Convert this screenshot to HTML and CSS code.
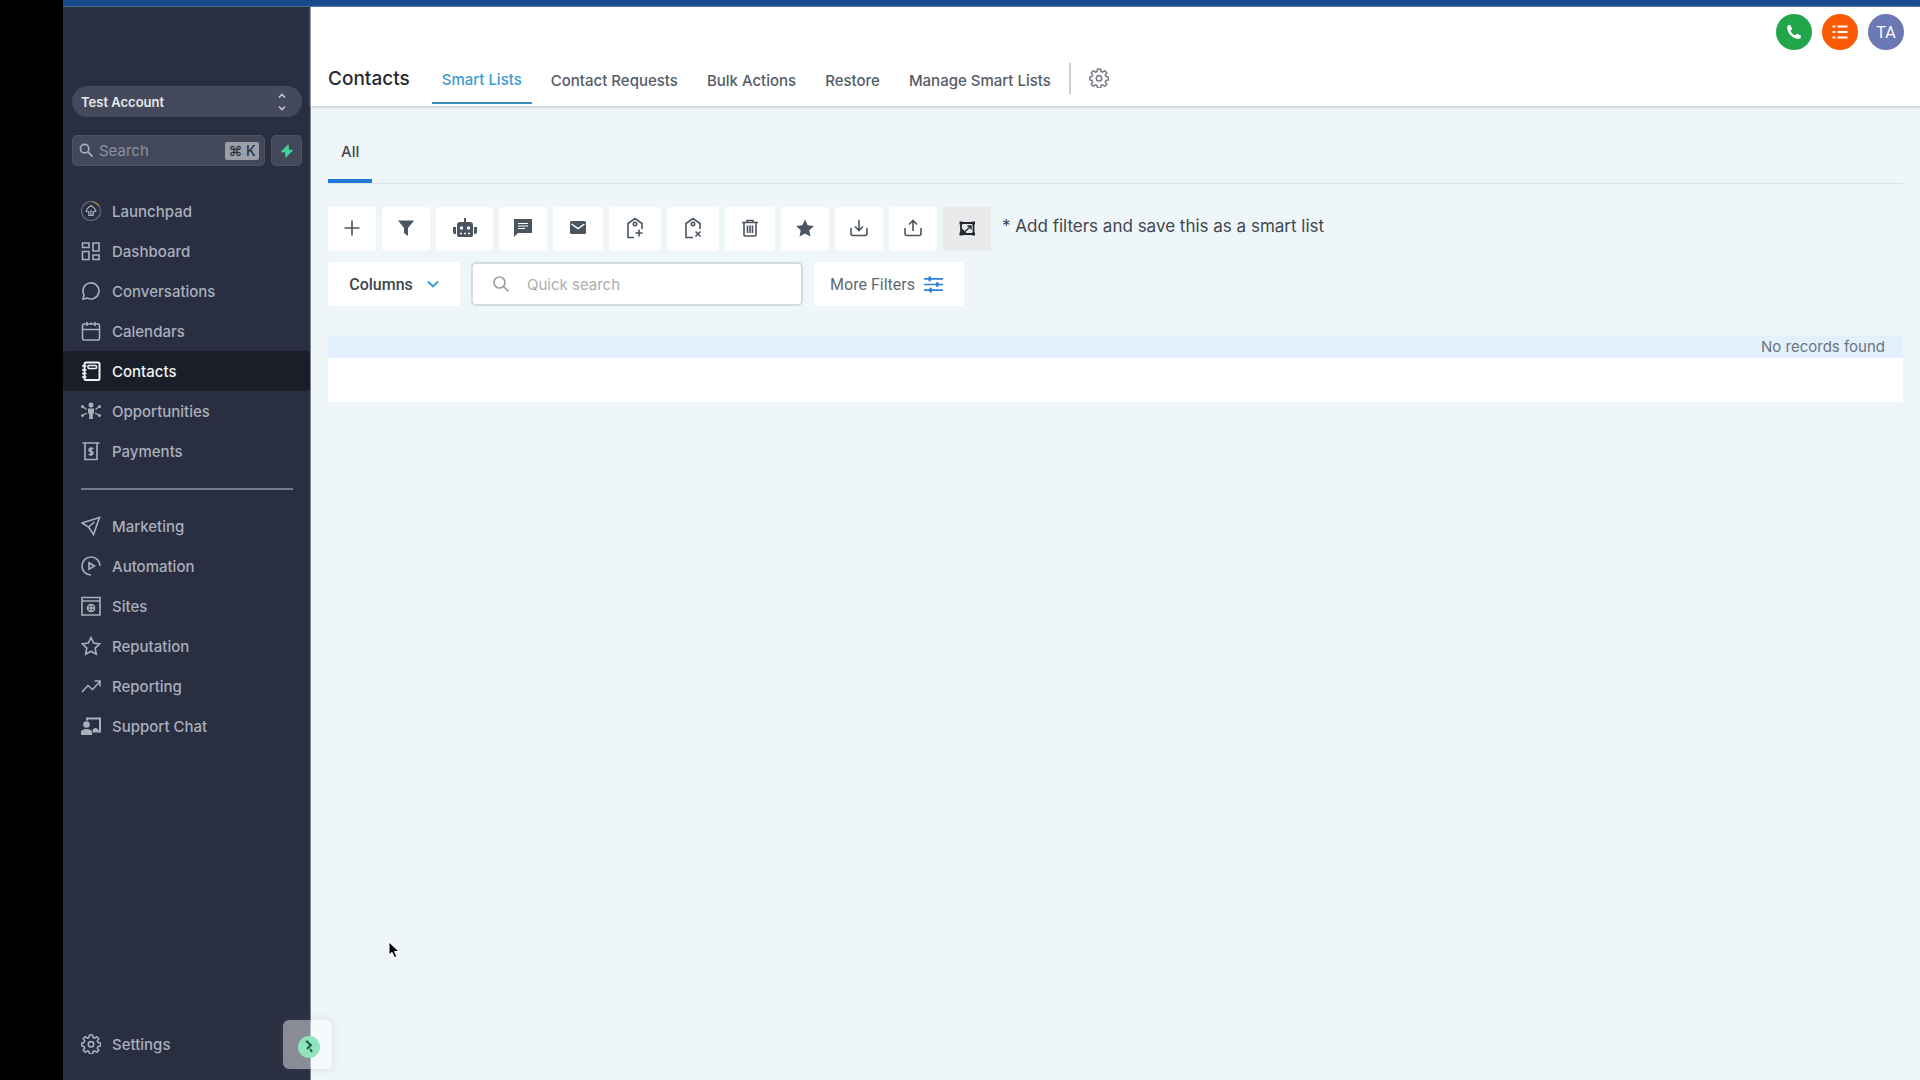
FILE: index.html
```html
<!DOCTYPE html>
<html lang="en">
<head>
<meta charset="utf-8">
<meta name="viewport" content="width=device-width, initial-scale=1">
<title>Contacts</title>
<link rel="stylesheet" href="styles.css">
</head>
<body>
<div class="topbar"></div>
<div class="app">
  <aside class="sidebar">
    <button class="account" type="button">
      <span>Test Account</span>
      <svg class="account-icon" viewBox="0 0 10 18"><path d="M2 4.500l3-3 3 3M2 13.500l3 3 3-3"/></svg>
    </button>
    <div class="search-row">
      <label class="search">
        <svg class="search-icon" viewBox="0 0 16 16"><circle cx="6" cy="6" r="4.500"/><path d="M9.500 9.500l5 5"/></svg>
        <input class="search-input" type="text" placeholder="Search" aria-label="Search">
        <kbd class="shortcut">⌘ K</kbd>
      </label>
      <button class="bolt" type="button" aria-label="Quick actions">
        <svg class="bolt-icon" viewBox="0 0 14 14"><path d="M8.500 0L.500 8.200h4.500L5.500 14 13.500 5.800H9z"/></svg>
      </button>
    </div>
    <nav class="nav">
      <a class="nav-link" href="#"><svg class="icon" viewBox="0 0 20 20"><circle cx="10" cy="10" r="9.500" stroke-width="1.200" opacity=".45"/><path d="M12 .800a9.500 9.500 0 0 1 6 4.500" stroke="#a5814c" stroke-width="1.200"/><path d="M10 4.500c3 2.200 4.800 4 4.800 6h-2.600v4H7.800v-4H5.200c0-2 1.800-3.800 4.800-6zM10 9v5.500" stroke-width="1.200"/></svg>Launchpad</a>
      <a class="nav-link" href="#"><svg class="icon" viewBox="0 0 20 20"><path d="M1.500 2h6.500v4.500H1.500zM12 2h6v8h-6zM1.500 10.500h6.500v8H1.500zM12 14h6v4.500h-6z"/></svg>Dashboard</a>
      <a class="nav-link" href="#"><svg class="icon" viewBox="0 0 20 20"><path d="M2 18l1-4.200a8 8 0 1 1 3.500 3.300z"/></svg>Conversations</a>
      <a class="nav-link" href="#"><svg class="icon" viewBox="0 0 20 20"><rect x="1.500" y="3" width="17" height="16" rx="1.500"/><path d="M1.500 8.500h17M6 1v4M14 1v4M10 1.500v2"/></svg>Calendars</a>
      <a class="nav-link nav-link--active" href="#" aria-current="page"><svg class="icon" viewBox="0 0 20 20"><rect x="3.500" y="1.500" width="15" height="17.500" rx="1.500" stroke-width="2"/><rect x="7" y="4.500" width="8.500" height="3" rx="1"/><path d="M1 5h4.500M1 9h4.500M1 12.500h4.500M1 16h4.500"/></svg>Contacts</a>
      <a class="nav-link" href="#"><svg class="icon" viewBox="0 0 20 20"><g fill="currentColor" stroke="none"><circle cx="10" cy="4" r="2.500"/><path d="M7 7.500h6v5h-1.200V18H8.200v-5.500H7z"/><circle cx="1.500" cy="5.500" r="1.500"/><circle cx="1.500" cy="14.500" r="1.500"/><circle cx="18.500" cy="5.500" r="1.500"/><circle cx="18.500" cy="14.500" r="1.500"/></g><path d="M1.500 5.500L5.500 8.500M1.500 14.500L6 12M18.500 5.500L14.500 8.500M18.500 14.500L14 12" stroke-width="1.400"/></svg>Opportunities</a>
      <a class="nav-link" href="#"><svg class="icon" viewBox="0 0 20 20"><path d="M1.500 2h17M4 2v16.500h12V2M12.500 7.500h-3a1.500 1.500 0 0 0 0 3h1a1.500 1.500 0 0 1 0 3h-3M10 6v9"/></svg>Payments</a>
      <hr class="nav-divider">
      <a class="nav-link" href="#"><svg class="icon" viewBox="0 0 20 20"><path d="M18.500 1.500L1 7l6.500 4 5 7.500zM7.500 11l6-5"/></svg>Marketing</a>
      <a class="nav-link" href="#"><svg class="icon" viewBox="0 0 20 20"><path d="M10 19a9 9 0 1 1 9-9M8 6.800l5.500 3.200L8 13.200z"/></svg>Automation</a>
      <a class="nav-link" href="#"><svg class="icon" viewBox="0 0 20 20"><path d="M1 1.500h18v17.500H1zM1 5h18"/><circle cx="10" cy="12" r="3.500"/><path d="M6.500 12h7M10 8.500v7"/></svg>Sites</a>
      <a class="nav-link" href="#"><svg class="icon" viewBox="0 0 20 20"><path d="M10 1.500l2.600 5.600 6 .8-4.400 4.200 1.100 6.100L10 15.200l-5.300 3 1.100-6.100L1.400 7.900l6-.8z"/></svg>Reputation</a>
      <a class="nav-link" href="#"><svg class="icon" viewBox="0 0 20 20"><path d="M1 16l6-6.500 4.500 4L19 5.500M13.500 5H19v5.500"/></svg>Reporting</a>
      <a class="nav-link" href="#"><svg class="icon" viewBox="0 0 20 20"><path d="M6 4.500V2.500h13v13h-2" stroke-width="2"/><g fill="currentColor" stroke="none"><circle cx="5.500" cy="8.500" r="3.300"/><path d="M0 19v-2.500C0 14.500 2.500 13 5.500 13s5.500 1.500 5.500 3.500V19zM11.500 16.500c-.5-3 1-4.500 3-4.500s3.500 1.500 3 4.500z"/></g></svg>Support Chat</a>
      <a class="nav-link nav-link--last" href="#"><svg class="icon" viewBox="0 0 20 20"><path d="M8.500 1h3l.5 2.500 1.600.7 2.200-1.500 2 2-1.500 2.200.7 1.600 2.500.5v3l-2.500.5-.7 1.600 1.500 2.200-2 2-2.200-1.500-1.600.7-.5 2.500h-3l-.5-2.500-1.600-.7-2.200 1.500-2-2 1.500-2.200L3 12.500.800 12V9L3 8.500l.7-1.600-1.500-2.200 2-2 2.200 1.500L8 3.500z" stroke-linejoin="round"/><circle cx="10" cy="10.300" r="2.700"/></svg>Settings</a>
    </nav>
  </aside>

  <div class="main">
    <header class="header">
      <div class="actions">
        <button class="round round--call" type="button" aria-label="Call"><svg class="round-icon" viewBox="0 0 16 16"><path d="M3.700 1L1.200 1.700C.4 9 7 15.600 14.300 14.800l.7-2.500c.1-.4-.1-.9-.5-1L11.300 10c-.4-.2-.8 0-1 .3l-1.100 1.300A10 10 0 0 1 4.400 6.800l1.300-1.100c.3-.2.5-.6.300-1L4.700 1.500c-.2-.4-.6-.6-1-.5z" fill="#fff"/></svg></button>
        <button class="round round--tasks" type="button" aria-label="Tasks"><svg class="round-icon" viewBox="0 0 16 16"><path d="M.500 2.500h3M.500 8h3M.500 13.500h3M5.500 2.500h10M5.500 8h10M5.500 13.500h10" stroke="#fff" stroke-width="2.200"/></svg></button>
        <button class="round round--user" type="button" aria-label="Profile">TA</button>
      </div>
      <div class="header-nav">
        <h1 class="title">Contacts</h1>
        <nav class="sections">
          <a class="section section--active" href="#" aria-current="page">Smart Lists</a>
          <a class="section" href="#">Contact Requests</a>
          <a class="section" href="#">Bulk Actions</a>
          <a class="section" href="#">Restore</a>
          <a class="section" href="#">Manage Smart Lists</a>
        </nav>
        <button class="gear" type="button" aria-label="Settings"><svg class="icon gear-icon" viewBox="0 0 20 20"><path d="M8.500 1h3l.5 2.500 1.600.7 2.200-1.500 2 2-1.500 2.200.7 1.600 2.500.5v3l-2.500.5-.7 1.600 1.500 2.200-2 2-2.200-1.500-1.600.7-.5 2.500h-3l-.5-2.500-1.600-.7-2.200 1.500-2-2 1.500-2.200L3 12.500.800 12V9L3 8.500l.7-1.600-1.500-2.200 2-2 2.200 1.500L8 3.500z" stroke-linejoin="round"/><circle cx="10" cy="10.300" r="2.700"/></svg></button>
      </div>
    </header>

    <main class="content">
      <div class="tabs"><a class="tab" href="#">All</a></div>
      <div class="toolbar">
        <button class="tool" type="button" aria-label="Add contact"><svg class="icon" viewBox="0 0 20 20"><path d="M10 2.500v15M2.500 10h15"/></svg></button>
        <button class="tool" type="button" aria-label="Filter"><svg class="icon" viewBox="0 0 20 20"><path d="M2 2.500h16l-6 7.500v8l-4-3v-5z" fill="currentColor" stroke="none"/></svg></button>
        <button class="tool tool--xl" type="button" aria-label="Automation"><svg class="icon icon--lg" viewBox="0 0 24 24"><path d="M11 2h2v4h4a3 3 0 0 1 3 3v10a2 2 0 0 1-2 2H6a2 2 0 0 1-2-2V9a3 3 0 0 1 3-3h4zM0 11h3v7H2a2 2 0 0 1-2-2zM21 11h3v5a2 2 0 0 1-2 2h-1z" fill="currentColor" stroke="none"/><path d="M7 17.500h2M11 17.500h2M15 17.500h2" stroke="#fff"/><circle cx="8.500" cy="12" r="1.700" fill="#fff" stroke="none"/><circle cx="15.500" cy="12" r="1.700" fill="#fff" stroke="none"/></svg></button>
        <button class="tool" type="button" aria-label="Send SMS"><svg class="icon" viewBox="0 0 20 20"><path d="M1 1h18v14H5l-4 4z" fill="currentColor" stroke="none"/><path d="M5 5.500h10M5 8h10M5 10.500h7" stroke="#fff" stroke-width="1.100"/></svg></button>
        <button class="tool tool--m" type="button" aria-label="Send email"><svg class="icon" viewBox="0 0 20 20"><rect x="2" y="3" width="16" height="13" rx="1.500" fill="currentColor" stroke="none"/><path d="M3.500 6l6.500 4.500L16.500 6" stroke="#fff" stroke-width="1.500"/></svg></button>
        <button class="tool tool--l" type="button" aria-label="Add tag"><svg class="icon icon--tag" viewBox="0 0 20 22"><path d="M9 20.500H3V6.500l7-5 7 5v5.500"/><circle cx="10" cy="7" r="1.700"/><path d="M14 12.500v7M10.500 16h7"/></svg></button>
        <button class="tool tool--l" type="button" aria-label="Remove tag"><svg class="icon icon--tag" viewBox="0 0 20 22"><path d="M10 20.500H3V6.500l7-5 7 5v5.500"/><circle cx="10" cy="7" r="1.700"/><path d="M12.500 14.500l5 5M17.500 14.500l-5 5"/></svg></button>
        <button class="tool tool--m" type="button" aria-label="Delete"><svg class="icon" viewBox="0 0 20 20"><path d="M2 4.500h16M4 4.500V17a1 1 0 0 0 1 1h10a1 1 0 0 0 1-1V4.500M7 4.500V2.500h6v2M7.500 7.500v7.500M10 7.500v7.500M12.500 7.500v7.500"/></svg></button>
        <button class="tool" type="button" aria-label="Reviews"><svg class="icon" viewBox="0 0 20 20"><path d="M10 1.500l2.700 5.700 6.100.8-4.500 4.200 1.200 6.200-5.500-3-5.500 3 1.200-6.200L1.200 8l6.100-.8z" fill="currentColor" stroke="none"/></svg></button>
        <button class="tool" type="button" aria-label="Export"><svg class="icon" viewBox="0 0 20 20"><path d="M2 10v5.500a2 2 0 0 0 2 2h12a2 2 0 0 0 2-2V10M10 2v10M6 8.500l4 4 4-4"/></svg></button>
        <button class="tool" type="button" aria-label="Import"><svg class="icon" viewBox="0 0 20 20"><path d="M2 10v5.500a2 2 0 0 0 2 2h12a2 2 0 0 0 2-2V10M10 13V3M6 6.500l4-4 4 4"/></svg></button>
        <button class="tool tool--dim" type="button" aria-label="Merge"><svg class="icon" viewBox="0 0 20 20"><path d="M4 5h12.500v11H4z" stroke-width="1.800"/><path d="M2.500 3.500h3v3h-3zM15 3.500h3v3h-3zM2.500 14.500h3v3h-3zM15 14.500h3v3h-3zM5 10.500l4.500 4.500H5z" fill="currentColor" stroke="none"/><path d="M8 13.500l5.500-5M10.500 8H14v3.500" stroke-width="1.300"/></svg></button>
        <p class="hint">* Add filters and save this as a smart list</p>
      </div>
      <div class="filters">
        <button class="filter filter--columns" type="button">Columns<svg class="chevron" viewBox="0 0 12 8"><path d="M1 1.500l5 5 5-5"/></svg></button>
        <label class="quick">
          <svg class="quick-icon" viewBox="0 0 16 16"><circle cx="6.500" cy="6.500" r="5.500"/><path d="M10.500 10.500l5 5"/></svg>
          <input class="quick-input" type="text" placeholder="Quick search" aria-label="Quick search">
        </label>
        <button class="filter filter--more" type="button">More Filters<svg class="sliders" viewBox="0 0 20 18"><path d="M0 3h20M0 9h20M0 15h20" stroke-width="1.800"/><path d="M6 0.500v5M14 6.500v5M7 12.500v5" stroke-width="2.500"/></svg></button>
      </div>
      <table class="records">
        <thead><tr><th class="records-status">No records found</th></tr></thead>
        <tbody><tr><td class="records-empty"></td></tr></tbody>
      </table>
    </main>
  </div>
</div>

<button class="widget" type="button" aria-label="Open widget"><svg class="widget-icon" viewBox="0 0 22 22"><circle cx="11" cy="11" r="11" fill="#8fe3bd"/><path d="M8 5l5 4-4 4M9 5l3.500 4.500M12 13l2 3" fill="none" stroke="#24574a" stroke-width="2"/></svg></button>
<svg class="pointer" viewBox="0 0 12 18"><path d="M1 1v13l3-2.700L6.500 16.500l2.300-1L6.500 10.500H11z" fill="#000" stroke="#fff"/></svg>
</body>
</html>
```
FILE: styles.css
```css
*, *::before, *::after { box-sizing: border-box; }

body {
  margin: 0;
  min-height: 100vh;
  display: flex;
  flex-direction: column;
  background: #000;
  font-family: Inter, "Liberation Sans", sans-serif;
  font-size: 15px;
  color: #3f4650;
}

button {
  border: 0;
  padding: 0;
  font: inherit;
  color: inherit;
  display: flex;
  align-items: center;
  justify-content: center;
}

input {
  min-width: 0;
  flex: 1;
  border: 0;
  padding: 0;
  background: transparent;
  font: inherit;
  color: inherit;
}

a { color: inherit; text-decoration: none; }

svg { flex: none; }

.icon {
  width: 20px;
  height: 20px;
  fill: none;
  stroke: currentColor;
  stroke-width: 1.6;
}

.icon--lg { width: 24px; height: 24px; }
.icon--tag { width: 20px; height: 22px; }

.topbar {
  height: 7px;
  margin-left: 63px;
  background: #184a8c;
  border-bottom: 1px solid #4b6a94;
}

.app {
  flex: 1;
  display: flex;
  padding-left: 63px;
}

/* Sidebar */
.sidebar {
  width: 248px;
  display: flex;
  flex-direction: column;
  padding-top: 79px;
  background: #292e40;
  border-right: 1px solid #7b8292;
}

.account {
  height: 31px;
  margin: 0 8px 0 9px;
  padding: 0 15px 0 9px;
  justify-content: space-between;
  border-radius: 16px;
  background: #444a5b;
  color: #e6e9ee;
  font-size: 13px;
  font-weight: 600;
}

.account-icon {
  width: 10px;
  height: 18px;
  fill: none;
  stroke: #c3c7d0;
  stroke-width: 1.6;
}

.search-row {
  display: flex;
  gap: 6px;
  margin: 18px 8px 0 9px;
}

.search {
  flex: 1;
  min-width: 0;
  height: 31px;
  display: flex;
  align-items: center;
  gap: 5px;
  padding: 0 5px 0 6px;
  border: 1px solid #4d5364;
  border-radius: 5px;
  background: #424859;
}

.search-icon {
  width: 15px;
  height: 15px;
  fill: none;
  stroke: #a9aebb;
  stroke-width: 1.8;
}

.search-input { font-size: 15px; }
.search-input::placeholder { color: #8b91a1; opacity: 1; }

.shortcut {
  width: 34px;
  height: 18px;
  border-radius: 2px;
  background: #9a9faa;
  color: #2d3242;
  font: 500 14px/18px Inter, "DejaVu Sans", sans-serif;
  text-align: center;
}

.bolt {
  width: 31px;
  border: 1px solid #4d5364;
  border-radius: 5px;
  background: #424859;
}

.bolt-icon { width: 14px; height: 14px; fill: #43d19a; }

.nav {
  flex: 1;
  display: flex;
  flex-direction: column;
  padding: 25px 0 16px;
}

.nav-link {
  height: 40px;
  display: flex;
  align-items: center;
  gap: 11px;
  padding-left: 18px;
  border-radius: 4px;
  color: #a9afbc;
  font-weight: 500;
}

.nav-link--active { background: #191e28; color: #f0f2f5; }
.nav-link--last { margin-top: auto; }

.nav-divider {
  height: 2px;
  margin: 17px 17px 16px 18px;
  border: 0;
  background: #747b8b;
}

/* Header */
.main {
  flex: 1;
  min-width: 0;
  display: flex;
  flex-direction: column;
  background: #eff6fa;
}

.header {
  background: #fff;
  padding-top: 7px;
  box-shadow: 0 1px 3px #b9c0c3;
}

.actions {
  display: flex;
  justify-content: flex-end;
  gap: 10px;
  padding-right: 16px;
}

.round {
  width: 36px;
  height: 36px;
  border-radius: 50%;
  color: #fff;
  font: 16px Roboto, sans-serif;
}

.round--call { background: #22a64b; }
.round--tasks { background: #fb5a05; }
.round--user { background: #6a78b3; }
.round-icon { width: 16px; height: 16px; }

.header-nav {
  height: 56px;
  display: flex;
  align-items: center;
  padding-left: 17px;
}

.title {
  margin: 0 22px 0 0;
  color: #262b33;
  font-size: 19px;
  font-weight: 500;
}

.sections {
  align-self: stretch;
  display: flex;
  gap: 9px;
}

.section {
  height: 54px;
  display: flex;
  align-items: center;
  padding: 6px 10px 0;
  color: #555c68;
  font-weight: 500;
}

.section--active {
  border-bottom: 2px solid #3f8db5;
  color: #3b9bd3;
}

.gear {
  height: 31px;
  margin-left: 8px;
  padding-left: 18px;
  border-left: 2px solid #ccc;
  background: transparent;
  color: #7b8087;
}

/* Content */
.content { padding: 14px 17px 0; }

.tabs {
  display: flex;
  border-bottom: 1px solid #dbe3e8;
}

.tab {
  height: 63px;
  padding: 2px 13px 0;
  border-bottom: 4px solid #1f7cd6;
  font-weight: 500;
  line-height: 60px;
}

.toolbar {
  display: flex;
  flex-wrap: wrap;
  gap: 6px;
  padding-top: 23px;
}

.tool {
  width: 48px;
  height: 44px;
  padding-bottom: 3px;
  border-radius: 4px;
  background: #fff;
  color: #4a555f;
}

.tool--m { width: 50px; }
.tool--l { width: 52px; }
.tool--xl { width: 57px; }
.tool--dim { background: #e9eaeb; color: #23272b; border-radius: 2px; }

.hint {
  margin: 0 0 0 5px;
  font-size: 17px;
  line-height: 38px;
}

.filters {
  display: flex;
  gap: 11px;
  padding-top: 11px;
}

.filter {
  height: 44px;
  border-radius: 4px;
  background: #fff;
  font: 500 16px Roboto, sans-serif;
}

.filter--columns { width: 132px; gap: 14px; }
.filter--more {
  width: 150px;
  gap: 9px;
  padding-right: 5px;
  color: #626a73;
  font-weight: 400;
}

.chevron { width: 12px; height: 8px; fill: none; stroke: #3b97dc; stroke-width: 1.8; }
.sliders { width: 19px; height: 17px; fill: none; stroke: #2a7fd8; }

.quick {
  width: 332px;
  height: 44px;
  display: flex;
  align-items: center;
  gap: 18px;
  padding: 0 20px;
  border: 2px solid #d3dbe1;
  border-radius: 5px;
  background: #fff;
}

.quick-icon { width: 16px; height: 16px; fill: none; stroke: #9ba0a5; stroke-width: 1.7; }
.quick-input::placeholder { color: #a9adb1; opacity: 1; }

.records {
  width: 100%;
  margin-top: 30px;
  border-collapse: collapse;
}

.records-status {
  height: 22px;
  padding: 0 18px;
  background: #e3f0fd;
  color: #6a7583;
  font-weight: 400;
  line-height: 22px;
  text-align: right;
}

.records-empty { height: 44px; padding: 0; background: #fff; }

/* Overlays */
.widget {
  position: fixed;
  left: 283px;
  bottom: 11px;
  width: 49px;
  height: 49px;
  padding: 4px 0 0 3px;
  border-radius: 6px;
  background: rgba(255, 255, 255, .45);
  box-shadow: 0 0 8px rgba(120, 130, 145, .2);
}

.widget-icon { width: 22px; height: 22px; }

.pointer {
  position: fixed;
  left: 388px;
  top: 941px;
  width: 12px;
  height: 18px;
}
```
